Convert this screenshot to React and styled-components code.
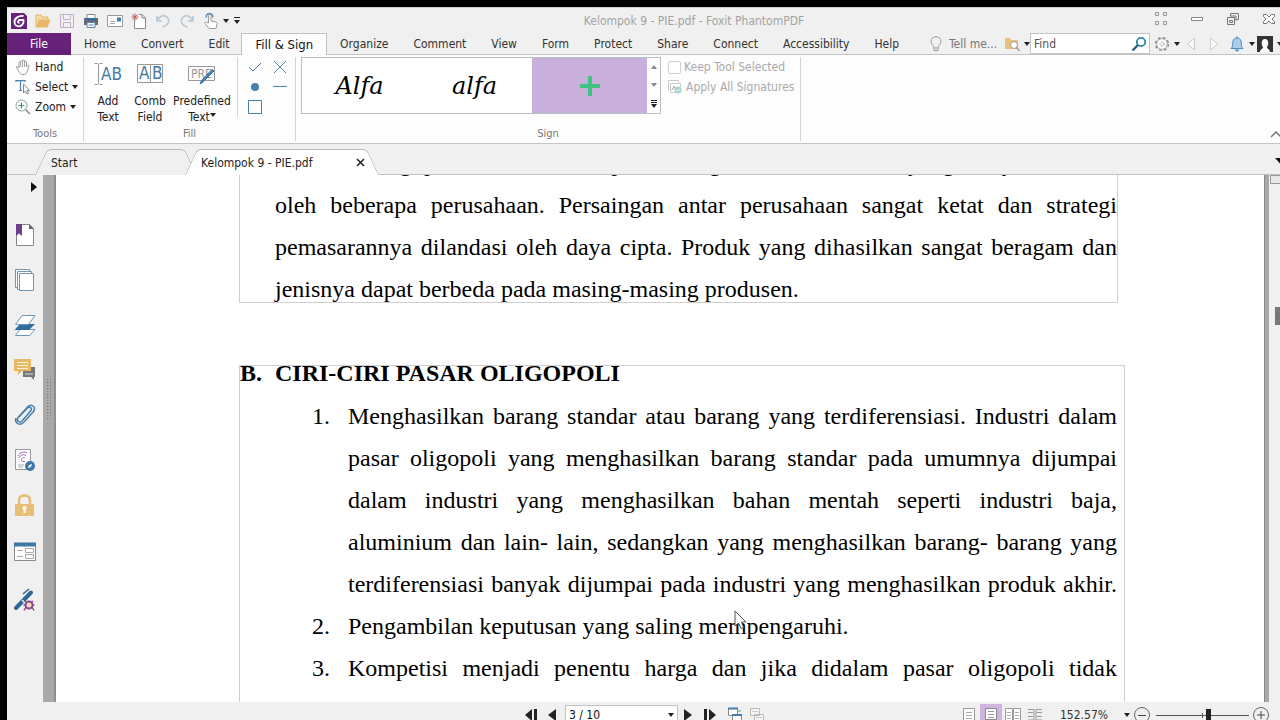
import { useState } from "react";
import styled, { createGlobalStyle, css } from "styled-components";

const GlobalStyle = createGlobalStyle`
  * { box-sizing: border-box; }
  body {
    margin: 0;
    background: #000;
    overflow: hidden;
  }
  body, button, input, select {
    font-family: "DejaVu Sans Condensed", "Noto Sans", sans-serif;
    font-size: 12px;
    color: #333;
  }
  button {
    border: 0;
    padding: 0;
    background: none;
  }
  svg { display: block; flex: none; }
`;

const Window = styled.div`
  display: flex;
  flex-direction: column;
  height: 100vh;
  padding: 7px 0 0 7px;
  overflow: hidden;
`;

/* ---------- title bar ---------- */

const TitleBar = styled.header`
  display: flex;
  align-items: center;
  flex: none;
  height: 26px;
  border-top: 1px solid #cfcfcf;
  background: #f0f0f0;
`;

const QuickAccess = styled.div`
  display: flex;
  align-items: center;
  width: 238px;
`;

const QuickButton = styled.button`
  display: flex;
  align-items: center;
  justify-content: center;
  flex: none;
  width: ${(p) => p.$w || 24}px;
  height: 24px;
`;

const WindowTitle = styled.div`
  flex: 1;
  text-align: center;
  color: #a3a3a3;
`;

const WindowControls = styled.div`
  display: flex;
  margin-right: -7px;
`;

const ControlButton = styled.button`
  display: flex;
  align-items: center;
  justify-content: center;
  width: 36px;
  height: 20px;
  margin-bottom: 4px;
`;

/* ---------- menu tabs ---------- */

const MenuBar = styled.nav`
  display: flex;
  flex: none;
  height: 22px;
  background: #f0f0f0;
  box-shadow: inset 0 -1px #c3c3c6;
`;

const MenuTab = styled.button`
  flex: none;
  height: 22px;
  padding: 0 12px 0 13px;
  white-space: nowrap;
  ${(p) => p.$file && css`
    width: 64px;
    padding: 0;
    background: #68217a;
    color: #fff;
  `}
  ${(p) => p.$active && css`
    padding: 0 13px;
    border: 1px solid #c3c3c6;
    border-bottom: 0;
    background: #fdfdfd;
    font-size: 13px;
    color: #111;
  `}
`;

const MenuTools = styled.div`
  display: flex;
  align-items: center;
  height: 21px;
  margin-left: auto;
`;

const TellMe = styled.button`
  display: flex;
  align-items: center;
  gap: 7px;
  width: 74px;
  color: #777;
  white-space: nowrap;
`;

const ToolButton = styled.button`
  display: flex;
  align-items: center;
  gap: 4px;
  width: ${(p) => p.$w}px;
  height: 20px;
  overflow: hidden;
`;

const FindBox = styled.label`
  display: flex;
  align-items: center;
  width: 120px;
  height: 21px;
  padding: 0 2px 0 3px;
  margin-right: 4px;
  border: 1px solid #c3c3c6;
  background: #fff;
`;

const FindInput = styled.input`
  flex: 1;
  min-width: 0;
  padding: 0;
  border: 0;
  outline: 0;
  &::placeholder { color: #555; opacity: 1; }
`;

/* ---------- ribbon ---------- */

const Ribbon = styled.section`
  display: flex;
  flex: none;
  height: 89px;
  padding-top: 2px;
  border-bottom: 1px solid #c3c3c6;
  background: #fdfdfd;
`;

const Group = styled.div`
  display: flex;
  flex-direction: column;
  width: ${(p) => p.$w}px;
  height: 84px;
  border-right: 1px solid #d2d2d2;
`;

const GroupBody = styled.div`
  display: flex;
  align-items: flex-start;
  flex: 1;
`;

const GroupLabel = styled.div`
  height: 14px;
  line-height: 14px;
  font-size: 11px;
  text-align: center;
  color: #777;
`;

const ToolList = styled.div`
  display: flex;
  flex-direction: column;
  padding-left: 8px;
`;

const SmallTool = styled.button`
  display: flex;
  align-items: center;
  gap: 4px;
  height: 20px;
  color: #222;
`;

const BigTool = styled.button`
  display: flex;
  flex-direction: column;
  align-items: center;
  width: ${(p) => p.$w}px;
  padding-top: 5px;
  line-height: 16px;
  color: #222;
  svg { margin-bottom: 7px; }
`;

const TextCaret = styled.span`
  display: inline-block;
  border: 3px solid transparent;
  border-top: 4px solid #222;
  border-bottom: 0;
  vertical-align: 4px;
`;

const Marks = styled.div`
  display: grid;
  grid-template-columns: 25px 25px;
  grid-auto-rows: 20px;
  height: 60px;
  padding-left: 4px;
  margin-left: 1px;
  border-left: 1px solid #d2d2d2;
`;

const MarkButton = styled.button`
  display: flex;
  align-items: center;
  justify-content: center;
`;

const Gallery = styled.div`
  display: flex;
  width: 360px;
  height: 57px;
  margin-left: 5px;
  border: 1px solid #b5c0c6;
  background: #fff;
`;

const Signature = styled.button`
  display: flex;
  align-items: center;
  justify-content: center;
  flex: 1;
  background: ${(p) => (p.$selected ? "#c9afdb" : "#fff")};
  font-family: "Lucida Handwriting", "DejaVu Serif", cursive;
  font-style: italic;
  font-size: 24px;
  color: #000;
`;

const GalleryScroll = styled.div`
  display: flex;
  flex-direction: column;
  width: 13px;
`;

const ScrollStep = styled.button`
  display: flex;
  align-items: center;
  justify-content: center;
  flex: 1;
`;

const SignOptions = styled.div`
  display: flex;
  flex-direction: column;
  padding-left: 7px;
  color: #aaa;
`;

const OptionRow = styled.label`
  display: flex;
  align-items: center;
  gap: 3px;
  height: 20px;
  white-space: nowrap;
`;

const CheckBox = styled.input`
  appearance: none;
  width: 13px;
  height: 13px;
  margin: 0;
  border: 1px solid #d0d0d0;
  border-radius: 2px;
  background: #fff;
`;

const OptionButton = styled.button`
  display: flex;
  align-items: center;
  gap: 4px;
  height: 20px;
  color: #aaa;
  white-space: nowrap;
`;

const Collapse = styled.button`
  align-self: flex-end;
  margin: 0 -2px 5px auto;
`;

/* ---------- document tabs ---------- */

const DocTabs = styled.div`
  display: flex;
  align-items: flex-end;
  flex: none;
  height: 31px;
  padding-left: 34px;
  border-bottom: 1px solid #c3c3c6;
  background: #f0f0f0;
`;

const DocTab = styled.button`
  position: relative;
  z-index: ${(p) => (p.$active ? 2 : 1)};
  display: flex;
  align-items: center;
  justify-content: space-between;
  width: ${(p) => p.$w}px;
  height: 26px;
  margin-bottom: -1px;
  padding: 2px 7px 0 10px;
  color: #222;
  &::before, &::after {
    content: "";
    position: absolute;
    z-index: -1;
    top: 0;
    bottom: 0;
    width: 60%;
    border-top: 1px solid #b9b9b9;
    background: ${(p) => (p.$active ? "#fff" : "#f0f0f0")};
  }
  &::before {
    left: 0;
    border-left: 1px solid #b9b9b9;
    border-top-left-radius: 5px;
    transform: skewX(-25deg);
  }
  &::after {
    right: 0;
    border-right: 1px solid #b9b9b9;
    border-top-right-radius: 5px;
    transform: skewX(25deg);
  }
`;

const TabMenu = styled.button`
  align-self: center;
  margin: 3px -6px 0 auto;
`;

/* ---------- workspace ---------- */

const Workspace = styled.div`
  display: flex;
  flex: 1;
  min-height: 0;
  background: #f0f0f0;
`;

const Sidebar = styled.aside`
  display: flex;
  flex-direction: column;
  width: 36px;
`;

const PanelButton = styled.button`
  display: flex;
  align-items: center;
  justify-content: center;
  width: 35px;
  height: ${(p) => p.$h || 45}px;
`;

const ExpandButton = styled.button`
  display: flex;
  justify-content: flex-end;
  height: 37px;
  padding: 7px 6px 0 0;
`;

const Splitter = styled.div`
  display: flex;
  align-items: center;
  justify-content: center;
  width: 13px;
  border-right: 2px solid #8e8e8e;
  background: #a9a9a9;
`;

const Grip = styled.div`
  width: 6px;
  height: 42px;
  margin-bottom: 80px;
  background: radial-gradient(#777 30%, transparent 40%) 0 0 / 3px 3px;
`;

const Viewport = styled.main`
  position: relative;
  flex: 1;
  min-width: 0;
  overflow: hidden;
  background: #fff;
  font-family: "Liberation Serif", serif;
  font-size: 24px;
  line-height: 42px;
  color: #000;
`;

const Paragraph = styled.section`
  height: 162px;
  margin: -34px 146px 0 183px;
  padding-left: 35px;
  border: 1px solid #cfcfcf;
`;

const Section = styled.section`
  height: 800px;
  margin: 62px 139px 0 183px;
  padding-right: 7px;
  border: 1px solid #cfcfcf;
`;

const Heading = styled.h2`
  display: flex;
  margin: -14px 0 1px;
  font-size: 24px;
  span { width: 35px; }
`;

const List = styled.ol`
  margin: 0;
  padding: 0 0 0 72px;
  list-style: none;
`;

const Item = styled.li`
  display: flex;
`;

const ItemNumber = styled.span`
  flex: none;
  width: 36px;
`;

const ItemText = styled.div`
  flex: 1;
`;

const Line = styled.div`
  white-space: nowrap;
  text-align-last: ${(p) => (p.$short ? "left" : "justify")};
`;

const Pointer = styled.svg`
  position: absolute;
  left: 678px;
  top: 435px;
`;

const PageEdge = styled.div`
  width: 5px;
  border-left: 1px solid #888;
  background: #a9a9a9;
`;

const ScrollTrack = styled.div`
  width: 11px;
  padding-left: 1px;
`;

const ScrollUp = styled.button`
  display: block;
  width: 14px;
  height: 9px;
  border: 1px solid #999;
  background: #e8e8e8;
`;

const ScrollThumb = styled.div`
  width: 8px;
  height: 18px;
  margin: 123px 0 0 5px;
  background: #777;
`;

/* ---------- status bar ---------- */

const StatusClip = styled.footer`
  flex: none;
  height: 18px;
  overflow: hidden;
  background: #f0f0f0;
`;

const StatusBar = styled.div`
  display: flex;
  align-items: center;
  height: 25px;
  padding: 0 11px 0 515px;
`;

const StatusButton = styled.button`
  display: flex;
  align-items: center;
  justify-content: center;
  width: ${(p) => p.$w || 22}px;
  height: 22px;
  background: ${(p) => (p.$on ? "#cdb5e0" : "none")};
`;

const PageField = styled.div`
  display: flex;
  align-items: center;
  width: 113px;
  height: 20px;
  margin: 0 2px 0 1px;
  padding-right: 3px;
  border: 1px solid #c3c3c6;
  background: #fff;
`;

const PageSelect = styled.select`
  flex: 1;
  appearance: none;
  padding: 0 3px;
  border: 0;
  outline: 0;
  background: none;
  font-size: 12px;
  color: #111;
`;

const StatusRight = styled.div`
  display: flex;
  align-items: center;
  margin-left: auto;
`;

const ZoomValue = styled.button`
  display: flex;
  align-items: center;
  justify-content: space-between;
  width: 70px;
  margin: 0 2px 0 14px;
  font-size: 12px;
`;

const ZoomSlider = styled.input`
  appearance: none;
  width: 93px;
  height: 12px;
  margin: 0 4px;
  background: linear-gradient(#555, #555) 0 6px / 100% 1px no-repeat,
    linear-gradient(#555, #555) 46px 4px / 1px 5px no-repeat;
  &::-webkit-slider-thumb {
    appearance: none;
    width: 5px;
    height: 11px;
    background: #222;
  }
`;

/* ---------- icons ---------- */

const Svg = ({ w = 16, h = 16, children, ...rest }) => (
  <svg width={w} height={h} viewBox={`0 0 ${w} ${h}`} fill="none" aria-hidden="true" {...rest}>
    {children}
  </svg>
);

const Caret = ({ color = "#222" }) => (
  <Svg w={6} h={4}><path d="M0 0h6L3 4z" fill={color} /></Svg>
);

const LogoIcon = () => (
  <Svg>
    <path d="M0 0h13l3 3v13H0z" fill="#68217a" />
    <path d="M12.500 3C8 2.500 3 5 3.500 9.500c.5 4 5 5 7.500 2.500 1.500-1.500 2-3 1.500-5H9c-2 0-3 3-.5 3" stroke="#fff" strokeWidth="1.800" />
  </Svg>
);
const OpenIcon = () => (
  <Svg>
    <path d="M1 14V2h5l1 2h6v3" fill="#f2d9a4" stroke="#e3b665" />
    <path d="M1 14.500 4 6.500h11.500L12.500 14.500z" fill="#e9b867" />
  </Svg>
);
const SaveIcon = () => (
  <Svg>
    <path d="M1.500 1.500h13v13h-13zM4.500 1.500v5h7v-5M4.500 14.500v-5h7v5" stroke="#c4aecf" />
  </Svg>
);
const PrintIcon = () => (
  <Svg>
    <path d="M4 1.500h8V6H4z" fill="#fff" stroke="#888" />
    <path d="M1 5h14v7H1z" fill="#667" />
    <path d="M4 5h8v2H4z" fill="#2c6ea3" />
    <path d="M4 9.500h8v5H4z" fill="#fff" stroke="#5a86ad" />
    <path d="M5.500 12h5" stroke="#5a86ad" />
  </Svg>
);
const MailIcon = () => (
  <Svg>
    <path d="M.5 2.500h15v11H.5z" fill="#fff" stroke="#999" />
    <path d="M10 4.500h4v4h-4z" fill="#4579a5" />
    <path d="M3 8.500h5M3 10.500h5" stroke="#aaa" />
  </Svg>
);
const NewIcon = () => (
  <Svg>
    <path d="M3.500 6v9.500h11V5l-3.500-3.500H8M11 1.500V5h3.500" fill="#fff" stroke="#888" />
    <path d="M4 .5v7M.5 4h7M1.500 1.500l5 5M6.500 1.500l-5 5" stroke="#c45a5a" />
  </Svg>
);
const UndoIcon = ({ flip }) => (
  <Svg style={flip ? { transform: "scaleX(-1)" } : undefined}>
    <path d="M2 3v5h5M2.500 7.500C5 2 10 1.500 12.500 4.500c3 4 0 8.500-5 9.500" stroke="#b7c6d2" strokeWidth="1.500" />
  </Svg>
);
const TouchIcon = ({ w = 16 }) => (
  <Svg w={w}>
    <path d="M5.500 10V3c0-2 2.500-2 2.500 0v5l5 1c1 .3 1.300 1 1 2l-1 4.500H6L2 10.500c-.5-1.500 1-2 2-1z" fill="#fff" stroke="#999" />
    <path d="M3.500 4.500C2.500 1 6 0 7.500.8 9.500 1.500 10 3 9.500 4.500" stroke="#5a8bb5" strokeWidth="1.500" />
  </Svg>
);
const BulbIcon = () => (
  <Svg w={12} h={16}>
    <path d="M4 12c0-2.500-3-3.500-3-6.500C1 2.500 3 .8 6 .8s5 1.700 5 4.700c0 3-3 4-3 6.500zM4 12v2.500h4V12" stroke="#999" />
  </Svg>
);
const FolderSearchIcon = () => (
  <Svg>
    <path d="M1 13V2h5l1 2h7v9z" fill="#ebc078" />
    <circle cx="10" cy="9" r="3.500" fill="#fff" stroke="#999" />
    <path d="m12.500 11.500 3 3.500" stroke="#999" strokeWidth="1.500" />
  </Svg>
);
const FindIcon = () => (
  <Svg>
    <circle cx="10" cy="6" r="4.200" fill="#fff" stroke="#2d86a8" strokeWidth="1.800" />
    <path d="m7 9-5.500 5.500" stroke="#2b5f8c" strokeWidth="2.400" />
  </Svg>
);
const GearIcon = () => (
  <Svg>
    <circle cx="8" cy="8" r="6.300" stroke="#888" strokeWidth="1.600" strokeDasharray="2.700 2.250" />
    <circle cx="8" cy="8" r="5.300" fill="#fff" stroke="#999" strokeWidth=".8" />
    <circle cx="8" cy="8" r="2" stroke="#888" strokeDasharray="1.500 1" />
  </Svg>
);
const BellIcon = () => (
  <Svg>
    <path d="M2 12.500c2-1 1.500-5 2-7.500.5-2 2-3 4-3s3.500 1 4 3c.5 2.500 0 6.500 2 7.500z" fill="#a9cdeb" stroke="#4b8cc0" />
    <path d="M6.500 13.500c.5 1.500 2.500 1.500 3 0M8 .5V2" stroke="#4b8cc0" strokeWidth="1.500" />
  </Svg>
);
const UserIcon = () => (
  <Svg>
    <path d="M0 0h16v16H0z" fill="#333" />
    <path d="M3 16c0-3 3-3 3-5-2-2-2-8 2-8s4 6 2 8c0 2 3 2 3 5z" fill="#fff" />
  </Svg>
);
const HandIcon = () => (
  <Svg>
    <path d="M4 9V4c0-1.300 1.700-1.300 1.700 0V2.500c0-1.300 1.900-1.300 1.900 0V2c0-1.300 1.900-1.300 1.900 0v1c0-1.200 1.900-1.200 1.900 0v5l1-1.500c1-1 2 0 1.500 1L12 13c-1 2-2 2.500-4 2.500S4.500 14 3.500 12L1.500 8.500C1 7.300 2.500 7 3 8z" fill="#fff" stroke="#999" />
    <path d="M5.700 4v4M7.600 3v5M9.500 3v5" stroke="#aaa" />
  </Svg>
);
const SelectIcon = () => (
  <Svg>
    <path d="M1 3V1.700h9V3M5.500 2v9.500M4 11.500h3" stroke="#4f80ab" strokeWidth="1.200" />
    <path d="M8.500 5v9l2-2 1.500 3 1.500-.8L12 11.500h2.500z" fill="#fff" stroke="#888" />
  </Svg>
);
const ZoomIcon = () => (
  <Svg>
    <circle cx="6.500" cy="6.500" r="5.500" fill="#fff" stroke="#8a9a9a" />
    <path d="m10.500 10.500 4.500 4.500" stroke="#888" strokeWidth="1.500" />
    <path d="M6.500 3.500v6M3.500 6.500h6" stroke="#3d8f83" strokeWidth="1.200" />
  </Svg>
);
const letters = { fontFamily: "DejaVu Sans Condensed", fill: "#4478a6" };
const AddTextIcon = () => (
  <Svg w={28} h={24}>
    <path d="M.5 1.500h3l1 1 1-1h3M.5 22.500h3l1-1 1 1h3M4.500 2v20" stroke="#999" />
    <text x="7" y="18" fontSize="17" {...letters}>AB</text>
  </Svg>
);
const CombIcon = () => (
  <Svg w={28} h={24}>
    <path d="M1.500 2.500h25v18h-25zM14.500 2v19" stroke="#999" />
    <text x="3" y="17" fontSize="17" {...letters}>A</text>
    <text x="16" y="17" fontSize="17" {...letters}>B</text>
  </Svg>
);
const PredefinedIcon = () => (
  <Svg w={30} h={24}>
    <path d="M1.500 4.500h26v14h-26z" stroke="#999" />
    <text x="4" y="16" fontSize="12" fontFamily="DejaVu Sans Condensed" fill="#999">PRE</text>
    <path d="M27 9 16 20l-3 2 1.500-3.500L25 7.500z" fill="#4b85b5" stroke="#346f9f" />
  </Svg>
);
const blue = "#4b80ad";
const marks = [
  ["Check mark", <path d="m2 8 4 4 8-8" stroke={blue} />],
  ["Cross", <path d="m2 2 12 12M14 2 2 14" stroke={blue} />],
  ["Dot", <circle cx="8" cy="8" r="4" fill={blue} />],
  ["Line", <path d="M1 7.500h14" stroke={blue} />],
  ["Rectangle", <path d="M1.500 1.500h13v13h-13z" stroke={blue} />],
];

const panels = [
  ["Bookmarks", 45, <>
    <path d="M3.500 1.500h13l4 4v17h-17z" fill="#fff" stroke="#888" />
    <path d="M16 1v5h5z" fill="#666" />
    <path d="M3 1h6v12l-3-2.500L3 13z" fill="#6b3f8c" />
  </>],
  ["Pages", 45, <>
    <path d="M2.500 1.500h14v18h-14z" fill="#fff" stroke="#7295b5" />
    <path d="M4.500 3.500h14v18h-14z" fill="#fff" stroke="#7295b5" />
    <path d="M6.500 5.500h14v17h-14z" fill="#fff" stroke="#7295b5" />
  </>],
  ["Layers", 45, <>
    <path d="M2.500 22.500 7 16.500h15L16.500 22.500z" fill="#fff" stroke="#6f96b8" />
    <path d="M1.500 17 7 11h15l-6 6z" fill="#2f6d9f" />
    <path d="M2.500 11.500 9 2.500h13L15.500 11.500z" fill="#fff" stroke="#6f96b8" />
  </>],
  ["Comments", 45, <>
    <path d="M10 9h12v10h-1v3l-3-3h-8z" fill="#777" />
    <path d="M1 1h17v12H9l-4 4v-4H1z" fill="#e8b965" />
    <path d="M4 4.500h11M4 7.500h11M4 10.500h11" stroke="#fff3d8" />
    <path d="M12 16h8" stroke="#ddd" />
  </>],
  ["Attachments", 45, <path
    d="m6 14 8.500-9c2-2 5 0 3.500 2.500L9 18c-2.500 2.500-6 0-4-3.500L15 3.500c3-3 8.500 0 5.500 5L11 19c-4 4.500-10 1-8-4"
    stroke="#4b80ad" strokeWidth="1.500" />],
  ["Security signatures", 45, <>
    <path d="M2.500 1.500h15v20h-15z" fill="#fff" stroke="#999" />
    <path d="M5 8c2-4 7-5 9-3M6 10c2-4 6-4 7-2M12 10c-3-2-5 3-2 3.500h2" stroke="#9a62ab" />
    <path d="M5 17h6M5 19h5" stroke="#aaa" />
    <circle cx="17" cy="18" r="5" fill="#3f77a8" />
    <path d="m15 20 1-3 3-1-1 3z" fill="#fff" />
  </>],
  ["Security", 45, <>
    <path d="M6 12V7c0-6 11-6 11 0v5" stroke="#e6bb72" strokeWidth="2.500" />
    <path d="M2 11h19v12H2z" fill="#e9bf76" />
    <circle cx="11.500" cy="15" r="2" fill="#fff" />
    <path d="M10.500 15h2v5h-2z" fill="#fff" />
  </>],
  ["Form fields", 50, <>
    <path d="M1.500 3.500h21v17h-21z" fill="#fff" stroke="#888" />
    <path d="M1 2.500h22v4H1z" fill="#3f77a8" />
    <path d="M4 10.500h6M4 16.500h6M12.500 8.500h8v4h-8zM12.500 14.500h8v4h-8z" stroke="#aaa" />
  </>],
  ["Digital signatures", 45, <>
    <path d="M3 20 18 4.500" stroke="#2f6796" strokeWidth="4" strokeLinecap="round" />
    <path d="m9 12 3 3" stroke="#f0f0f0" strokeWidth="1.500" />
    <path d="m10 6 6-5" stroke="#2f6796" strokeWidth="1.500" />
    <circle cx="16" cy="17" r="3.500" fill="#f4dcc0" stroke="#8a4a8c" strokeWidth="2" />
    <path d="m13 19-2 3.500M19 19l2 3.500M10.500 17h2M19.500 17h2M12 13l1 1M20 13l-1 1" stroke="#8a4a8c" strokeWidth="1.500" />
  </>],
];

const tabs = ["Home", "Convert", "Edit", "Fill & Sign", "Organize", "Comment", "View",
  "Form", "Protect", "Share", "Connect", "Accessibility", "Help"];

const intro = [
  "dalam barang penawaran terhadap sebidang industri tersebut yang hanya dikuasai",
  "oleh beberapa perusahaan. Persaingan antar perusahaan sangat ketat dan strategi",
  "pemasarannya dilandasi oleh daya cipta. Produk yang dihasilkan sangat beragam dan",
];

const items = [
  [
    "Menghasilkan barang standar atau barang yang terdiferensiasi. Industri dalam",
    "pasar oligopoli yang menghasilkan barang standar pada umumnya dijumpai",
    "dalam industri yang menghasilkan bahan mentah seperti industri baja,",
    "aluminium dan lain- lain, sedangkan yang menghasilkan barang- barang yang",
    "terdiferensiasi banyak dijumpai pada industri yang menghasilkan produk akhir.",
  ],
  ["Pengambilan keputusan yang saling mempengaruhi."],
  ["Kompetisi menjadi penentu harga dan jika didalam pasar oligopoli tidak"],
];

export default function App() {
  const [activeTab, setActiveTab] = useState("Fill & Sign");
  const [zoom, setZoom] = useState(57);

  return (
    <>
      <GlobalStyle />
      <Window>
        <TitleBar>
          <QuickAccess>
            <QuickButton aria-label="Foxit"><LogoIcon /></QuickButton>
            <QuickButton aria-label="Open"><OpenIcon /></QuickButton>
            <QuickButton aria-label="Save"><SaveIcon /></QuickButton>
            <QuickButton aria-label="Print"><PrintIcon /></QuickButton>
            <QuickButton aria-label="Email"><MailIcon /></QuickButton>
            <QuickButton aria-label="New"><NewIcon /></QuickButton>
            <QuickButton aria-label="Undo"><UndoIcon /></QuickButton>
            <QuickButton aria-label="Redo"><UndoIcon flip /></QuickButton>
            <QuickButton aria-label="Touch mode"><TouchIcon /></QuickButton>
            <QuickButton $w={6} aria-label="Touch options"><Caret /></QuickButton>
            <QuickButton $w={16} aria-label="Customize">
              <Svg w={6} h={7}><path d="M0 .5h6" stroke="#222" /><path d="M0 3h6L3 7z" fill="#222" /></Svg>
            </QuickButton>
          </QuickAccess>
          <WindowTitle>Kelompok 9 - PIE.pdf - Foxit PhantomPDF</WindowTitle>
          <WindowControls>
            <ControlButton aria-label="Ribbon display">
              <Svg><path d="M2.500 1.500h3v3h-3zM10.500 1.500h3v3h-3zM2.500 10.500h3v3h-3zM10.500 10.500h3v3h-3z" stroke="#999" /></Svg>
            </ControlButton>
            <ControlButton aria-label="Minimize">
              <Svg w={12} h={6}><path d="M.5 1.500h11v3H.5z" stroke="#888" fill="#fff" /></Svg>
            </ControlButton>
            <ControlButton aria-label="Restore">
              <Svg w={12} h={12}><path d="M3.500 3V.5h8v6H9M.5 4.500h7v7h-7zM2.500 7.500h3v2h-3zM3 3h6v5" stroke="#777" /></Svg>
            </ControlButton>
            <ControlButton aria-label="Close">
              <Svg w={12} h={10}><path d="M.5.5h3L6 3 8.500.5h3v2L9 5l2.500 2.500v2h-3L6 7 3.500 9.500h-3v-2L3 5 .5 2.500z" stroke="#777" fill="#fff" /></Svg>
            </ControlButton>
          </WindowControls>
        </TitleBar>

        <MenuBar>
          <MenuTab $file>File</MenuTab>
          {tabs.map((name) => (
            <MenuTab key={name} $active={name === activeTab} onClick={() => setActiveTab(name)}>{name}</MenuTab>
          ))}
          <MenuTools>
            <TellMe><BulbIcon />Tell me...</TellMe>
            <ToolButton $w={26} aria-label="Search folder"><FolderSearchIcon /><Caret /></ToolButton>
            <FindBox>
              <FindInput placeholder="Find" aria-label="Find" />
              <FindIcon />
            </FindBox>
            <ToolButton $w={32} aria-label="Settings"><GearIcon /><Caret /></ToolButton>
            <ToolButton $w={23} aria-label="Previous"><Svg w={10}><path d="M8.500 2v12L1.500 8z" stroke="#ccc" fill="#fafafa" /></Svg></ToolButton>
            <ToolButton $w={20} aria-label="Next"><Svg w={10}><path d="M1.500 2v12l7-6z" stroke="#ccc" fill="#fafafa" /></Svg></ToolButton>
            <ToolButton $w={28} aria-label="Notifications"><BellIcon /><Caret /></ToolButton>
            <ToolButton $w={23} aria-label="Account"><UserIcon /><Caret /></ToolButton>
          </MenuTools>
        </MenuBar>

        <Ribbon>
          <Group $w={77}>
            <GroupBody>
              <ToolList>
                <SmallTool><HandIcon />Hand</SmallTool>
                <SmallTool><SelectIcon />Select<Caret /></SmallTool>
                <SmallTool><ZoomIcon />Zoom<Caret /></SmallTool>
              </ToolList>
            </GroupBody>
            <GroupLabel>Tools</GroupLabel>
          </Group>
          <Group $w={212}>
            <GroupBody>
              <BigTool $w={48}><AddTextIcon />Add<br />Text</BigTool>
              <BigTool $w={36}><CombIcon />Comb<br />Field</BigTool>
              <BigTool $w={68}><PredefinedIcon />Predefined<br /><span>Text<TextCaret /></span></BigTool>
              <Marks>
                {marks.map(([name, shape]) => (
                  <MarkButton key={name} aria-label={name}><Svg>{shape}</Svg></MarkButton>
                ))}
              </Marks>
            </GroupBody>
            <GroupLabel>Fill</GroupLabel>
          </Group>
          <Group $w={505}>
            <GroupBody>
              <Gallery>
                <Signature>Alfa</Signature>
                <Signature>alfa</Signature>
                <Signature $selected aria-label="Add signature">
                  <Svg w={20} h={20}><path d="M10 0v20M0 10h20" stroke="#3fc380" strokeWidth="4" /></Svg>
                </Signature>
                <GalleryScroll>
                  <ScrollStep aria-label="Scroll up"><Svg w={6} h={4}><path d="M0 4h6L3 0z" fill="#888" /></Svg></ScrollStep>
                  <ScrollStep aria-label="Scroll down"><Caret color="#888" /></ScrollStep>
                  <ScrollStep aria-label="More signatures">
                    <Svg w={6} h={8}><path d="M0 .5h6M0 2.500h6" stroke="#222" /><path d="M0 4h6L3 8z" fill="#222" /></Svg>
                  </ScrollStep>
                </GalleryScroll>
              </Gallery>
              <SignOptions>
                <OptionRow><CheckBox type="checkbox" disabled />Keep Tool Selected</OptionRow>
                <OptionButton disabled>
                  <Svg w={14} h={14}>
                    <path d="M.5 10.500v-10h10v2M2.500 12.500v-9h10v9z" stroke="#ccc" fill="#fff" />
                    <path d="m4 10 2-4 1 3" stroke="#aaa" />
                    <circle cx="10" cy="10" r="3.500" fill="#a9d6cc" />
                    <path d="m8.500 10 1 1 2-2" stroke="#fff" />
                  </Svg>
                  Apply All Signatures
                </OptionButton>
              </SignOptions>
            </GroupBody>
            <GroupLabel>Sign</GroupLabel>
          </Group>
          <Collapse aria-label="Collapse ribbon">
            <Svg w={12} h={8}><path d="m1 7 5-5 5 5" stroke="#777" strokeWidth="1.500" /></Svg>
          </Collapse>
        </Ribbon>

        <DocTabs>
          <DocTab $w={150}>Start</DocTab>
          <DocTab $w={182} $active>
            Kelompok 9 - PIE.pdf
            <Svg w={10} h={10}><path d="m1 1 7 7M8 1 1 8" stroke="#222" strokeWidth="1.500" /></Svg>
          </DocTab>
          <TabMenu aria-label="Tab list"><Svg w={11} h={6}><path d="M0 0h11L5.500 6z" fill="#111" /></Svg></TabMenu>
        </DocTabs>

        <Workspace>
          <Sidebar>
            <ExpandButton aria-label="Expand panel">
              <Svg w={6} h={10}><path d="M0 0v10l6-5z" fill="#111" /></Svg>
            </ExpandButton>
            {panels.map(([name, height, shape]) => (
              <PanelButton key={name} $h={height} aria-label={name}><Svg w={24} h={24}>{shape}</Svg></PanelButton>
            ))}
          </Sidebar>
          <Splitter><Grip /></Splitter>
          <Viewport>
            <Paragraph>
              {intro.map((line) => <Line key={line}>{line}</Line>)}
              <Line $short>jenisnya dapat berbeda pada masing-masing produsen.</Line>
            </Paragraph>
            <Section>
              <Heading><span>B.</span>CIRI-CIRI PASAR OLIGOPOLI</Heading>
              <List>
                {items.map((lines, i) => (
                  <Item key={lines[0]}>
                    <ItemNumber>{i + 1}.</ItemNumber>
                    <ItemText>
                      {lines.map((line) => <Line key={line} $short={i === 1}>{line}</Line>)}
                    </ItemText>
                  </Item>
                ))}
              </List>
            </Section>
            <Pointer width="13" height="20" viewBox="0 0 13 20" aria-hidden="true">
              <path d="M1 1v15l3.500-3L7 18.500l2.500-1L7.500 12h4.500z" fill="#fff" stroke="#555" />
            </Pointer>
          </Viewport>
          <PageEdge />
          <ScrollTrack>
            <ScrollUp aria-label="Scroll up" />
            <ScrollThumb />
          </ScrollTrack>
        </Workspace>

        <StatusClip>
          <StatusBar>
            <StatusButton $w={18} aria-label="First page"><Svg w={12} h={12}><path d="M7 0v12L0 6zM9 0h3v12H9z" fill="#222" /></Svg></StatusButton>
            <StatusButton $w={24} aria-label="Previous page"><Svg w={8} h={12}><path d="M8 0v12L0 6z" fill="#222" /></Svg></StatusButton>
            <PageField>
              <PageSelect aria-label="Page"><option>3 / 10</option></PageSelect>
              <Caret />
            </PageField>
            <StatusButton $w={16} aria-label="Next page"><Svg w={8} h={12}><path d="M0 0v12l8-6z" fill="#222" /></Svg></StatusButton>
            <StatusButton $w={28} aria-label="Last page"><Svg w={12} h={12}><path d="M5 0v12l7-6zM0 0h3v12H0z" fill="#222" /></Svg></StatusButton>
            <StatusButton aria-label="Previous view">
              <Svg><path d="M1.500 1.500h9v7h-9zM5.500 7.500h9v6h-9z" fill="#fff" stroke="#888" /><path d="M1 1.500h10M5 8h10" stroke="#477ba8" strokeWidth="2" /><path d="M10 4h4" stroke="#5dae7e" /></Svg>
            </StatusButton>
            <StatusButton aria-label="Next view">
              <Svg><path d="M1.500 1.500h9v7h-9zM5.500 7.500h9v6h-9z" fill="#f4f4f4" stroke="#bbb" /><path d="M3 4.500h6M7 10.500h6" stroke="#ccc" /></Svg>
            </StatusButton>
            <StatusRight>
              <StatusButton aria-label="Single page"><Svg w={12} h={14}><path d="M.5.5h11v15H.5z" fill="#fff" stroke="#999" /><path d="M3 4.500h6M3 7.500h6M3 10.500h6" stroke="#aaa" /></Svg></StatusButton>
              <StatusButton $on aria-label="Continuous"><Svg w={12} h={14}><path d="M.5.5h11v11H.5z" fill="#fff" stroke="#888" /><path d="M3 3.500h6M3 6.500h6M3 9.500h6M0 13.500h12" stroke="#999" /></Svg></StatusButton>
              <StatusButton aria-label="Facing"><Svg w={16} h={14}><path d="M.5.5h7v15h-7zM8.500.5h7v15h-7z" fill="#fff" stroke="#999" /><path d="M2 4.500h4M2 7.500h4M2 10.500h4M10 4.500h4M10 7.500h4M10 10.500h4" stroke="#aaa" /></Svg></StatusButton>
              <StatusButton aria-label="Continuous facing"><Svg w={14} h={14}><path d="M0 1.500h6V12H0M14 1.500H8V12h6M0 4.500h5M0 8.500h5M9 4.500h5M9 8.500h5" stroke="#999" /></Svg></StatusButton>
              <ZoomValue>152.57%<Caret /></ZoomValue>
              <StatusButton $w={20} aria-label="Zoom out"><Svg><circle cx="8" cy="8" r="7.500" stroke="#666" /><path d="M4 8.500h8" stroke="#444" /></Svg></StatusButton>
              <ZoomSlider type="range" aria-label="Zoom" value={zoom} onChange={(e) => setZoom(+e.target.value)} />
              <StatusButton $w={16} aria-label="Zoom in"><Svg><circle cx="8" cy="8" r="7.500" stroke="#666" /><path d="M4 8h8M8 4v8" stroke="#444" /></Svg></StatusButton>
            </StatusRight>
          </StatusBar>
        </StatusClip>
      </Window>
    </>
  );
}
